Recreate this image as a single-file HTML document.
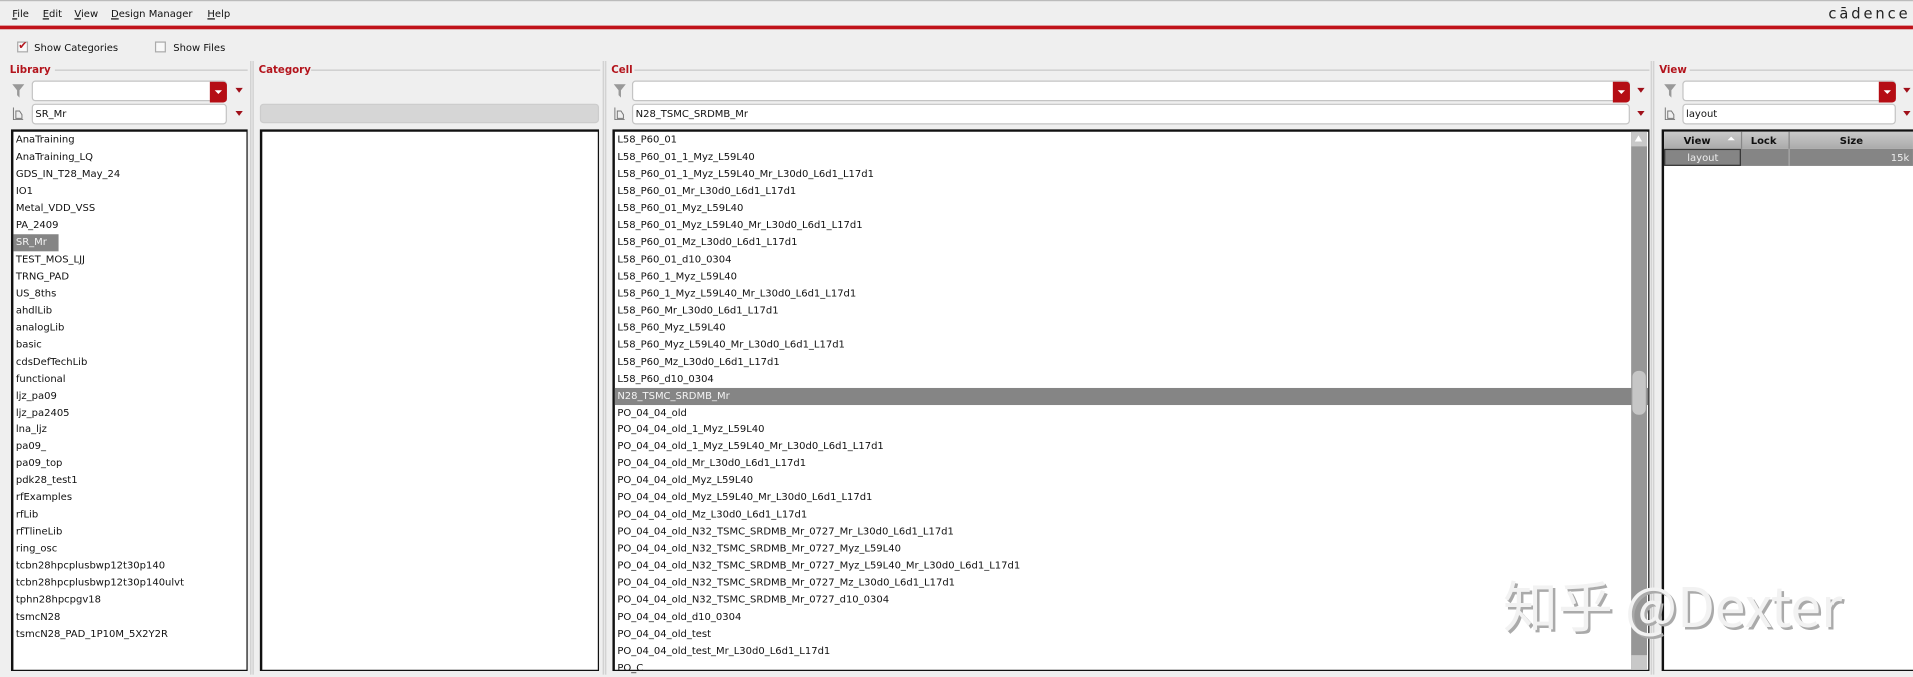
<!DOCTYPE html>
<html><head><meta charset="utf-8"><style>
*{margin:0;padding:0;box-sizing:border-box}
html,body{width:1913px;height:675px;overflow:hidden;background:#efefef}
#w{position:absolute;left:0;top:0;width:1568px;height:553px;transform:scale(1.22);transform-origin:0 0;font-family:"DejaVu Sans","Liberation Sans",sans-serif;font-size:8.2px;color:#111;background:#efefef}
.a{position:absolute}
.menu span{position:absolute;top:6px}
.lbl{position:absolute;color:#b3141c;font-weight:bold;font-size:8.4px}
.hr{position:absolute;height:1px;background:#c8c8c8}
.box{position:absolute;background:#fff;border:1px solid #c4c4c4;border-radius:3px;height:17px}
.rb{position:absolute;top:0;right:-1px;width:14px;height:17px;background:#b50d14;border-radius:0 3px 3px 0}
.rb:after{content:"";position:absolute;left:4px;top:7px;border:3px solid transparent;border-top:3px solid #fff}
.tri{position:absolute;border:3.5px solid transparent;border-top:4px solid #a0101a}
.list{position:absolute;background:#fff;border:1px solid #111;border-top:2px solid #111;border-left:2px solid #111}
.list div{height:13.97px;line-height:13.97px;padding-left:2px;white-space:nowrap}
.sel{background:#858585;color:#f4f4f4}
.vd{position:absolute;top:50px;width:3px;height:503px;border-left:1px solid #d0d0d0;border-right:1px solid #d0d0d0;background:#e8e8e8}
.fun{position:absolute;width:10px;height:11px}
</style></head><body><div id="w">
<div class="a" style="left:0;top:0;width:1568px;height:1px;background:#bbb"></div>
<div class="menu"><span style="left:10px"><u>F</u>ile</span><span style="left:35px"><u>E</u>dit</span><span style="left:61px"><u>V</u>iew</span><span style="left:91px"><u>D</u>esign Manager</span><span style="left:170px"><u>H</u>elp</span></div>
<div class="a" style="right:2px;top:4px;font-size:12px;letter-spacing:2.4px;color:#222">cādence</div>
<div class="a" style="left:0;top:21px;width:1568px;height:3px;background:#c0121a"></div>
<div class="a" style="left:14px;top:34px;width:9px;height:9px;border:1px solid #aaa;background:#f8f8f8;color:#b3141c;font-size:9px;line-height:7px;font-weight:bold">✔</div>
<div class="a" style="left:28px;top:34px">Show Categories</div>
<div class="a" style="left:127px;top:34px;width:9px;height:9px;border:1px solid #aaa;background:#f8f8f8"></div>
<div class="a" style="left:142px;top:34px">Show Files</div>

<div class="vd" style="left:205px"></div><div class="vd" style="left:494px"></div><div class="vd" style="left:1353px"></div>

<!-- Library -->
<div class="lbl" style="left:8px;top:52px">Library</div><div class="hr" style="left:45px;top:57px;width:158px"></div>
<svg class="fun" style="left:10px;top:69px" viewBox="0 0 10 11"><path d="M0 0H10L6 5V11L4 9V5Z" fill="#999"/></svg>
<div class="box" style="left:26px;top:66px;width:160px"><div class="rb"></div></div><div class="tri" style="left:193px;top:72px"></div>
<svg class="fun" style="left:10px;top:88px" viewBox="0 0 10 11"><path d="M1 0V10H9M3 3H6L8 6V9H3Z" fill="none" stroke="#777" stroke-width=".8"/></svg>
<div class="box" style="left:26px;top:85px;width:160px;line-height:15px;padding-left:2px">SR_Mr</div><div class="tri" style="left:193px;top:91px"></div>
<div class="list" style="left:9px;top:106px;width:194px;height:444px">
<div>AnaTraining</div><div>AnaTraining_LQ</div><div>GDS_IN_T28_May_24</div><div>IO1</div><div>Metal_VDD_VSS</div><div>PA_2409</div><div><span class="sel" style="padding:0 10px 0 2px;margin-left:-2px;display:inline-block">SR_Mr</span></div><div>TEST_MOS_LJJ</div><div>TRNG_PAD</div><div>US_8ths</div><div>ahdlLib</div><div>analogLib</div><div>basic</div><div>cdsDefTechLib</div><div>functional</div><div>ljz_pa09</div><div>ljz_pa2405</div><div>lna_ljz</div><div>pa09_</div><div>pa09_top</div><div>pdk28_test1</div><div>rfExamples</div><div>rfLib</div><div>rfTlineLib</div><div>ring_osc</div><div>tcbn28hpcplusbwp12t30p140</div><div>tcbn28hpcplusbwp12t30p140ulvt</div><div>tphn28hpcpgv18</div><div>tsmcN28</div><div>tsmcN28_PAD_1P10M_5X2Y2R</div></div>

<!-- Category -->
<div class="lbl" style="left:212px;top:52px">Category</div><div class="hr" style="left:255px;top:57px;width:237px"></div>
<div class="a" style="left:213px;top:85px;width:278px;height:16px;background:#d6d6d6;border:1px solid #ccc;border-radius:3px"></div>
<div class="list" style="left:213px;top:106px;width:278px;height:444px"></div>

<!-- Cell -->
<div class="lbl" style="left:501px;top:52px">Cell</div><div class="hr" style="left:520px;top:57px;width:832px"></div>
<svg class="fun" style="left:503px;top:69px" viewBox="0 0 10 11"><path d="M0 0H10L6 5V11L4 9V5Z" fill="#999"/></svg>
<div class="box" style="left:518px;top:66px;width:818px"><div class="rb"></div></div><div class="tri" style="left:1342px;top:72px"></div>
<svg class="fun" style="left:503px;top:88px" viewBox="0 0 10 11"><path d="M1 0V10H9M3 3H6L8 6V9H3Z" fill="none" stroke="#777" stroke-width=".8"/></svg>
<div class="box" style="left:518px;top:85px;width:818px;line-height:15px;padding-left:2px">N28_TSMC_SRDMB_Mr</div><div class="tri" style="left:1342px;top:91px"></div>
<div class="list" style="left:502px;top:106px;width:850px;height:444px">
<div>L58_P60_01</div><div>L58_P60_01_1_Myz_L59L40</div><div>L58_P60_01_1_Myz_L59L40_Mr_L30d0_L6d1_L17d1</div><div>L58_P60_01_Mr_L30d0_L6d1_L17d1</div><div>L58_P60_01_Myz_L59L40</div><div>L58_P60_01_Myz_L59L40_Mr_L30d0_L6d1_L17d1</div><div>L58_P60_01_Mz_L30d0_L6d1_L17d1</div><div>L58_P60_01_d10_0304</div><div>L58_P60_1_Myz_L59L40</div><div>L58_P60_1_Myz_L59L40_Mr_L30d0_L6d1_L17d1</div><div>L58_P60_Mr_L30d0_L6d1_L17d1</div><div>L58_P60_Myz_L59L40</div><div>L58_P60_Myz_L59L40_Mr_L30d0_L6d1_L17d1</div><div>L58_P60_Mz_L30d0_L6d1_L17d1</div><div>L58_P60_d10_0304</div><div class="sel">N28_TSMC_SRDMB_Mr</div><div>PO_04_04_old</div><div>PO_04_04_old_1_Myz_L59L40</div><div>PO_04_04_old_1_Myz_L59L40_Mr_L30d0_L6d1_L17d1</div><div>PO_04_04_old_Mr_L30d0_L6d1_L17d1</div><div>PO_04_04_old_Myz_L59L40</div><div>PO_04_04_old_Myz_L59L40_Mr_L30d0_L6d1_L17d1</div><div>PO_04_04_old_Mz_L30d0_L6d1_L17d1</div><div>PO_04_04_old_N32_TSMC_SRDMB_Mr_0727_Mr_L30d0_L6d1_L17d1</div><div>PO_04_04_old_N32_TSMC_SRDMB_Mr_0727_Myz_L59L40</div><div>PO_04_04_old_N32_TSMC_SRDMB_Mr_0727_Myz_L59L40_Mr_L30d0_L6d1_L17d1</div><div>PO_04_04_old_N32_TSMC_SRDMB_Mr_0727_Mz_L30d0_L6d1_L17d1</div><div>PO_04_04_old_N32_TSMC_SRDMB_Mr_0727_d10_0304</div><div>PO_04_04_old_d10_0304</div><div>PO_04_04_old_test</div><div>PO_04_04_old_test_Mr_L30d0_L6d1_L17d1</div><div>PO_C</div></div>
<div class="a" style="left:1337px;top:108px;width:13px;height:441px;background:#979797"></div>
<div class="a" style="left:1337px;top:108px;width:13px;height:12px;background:#c8c8c8"></div>
<div class="a" style="left:1340px;top:111px;border:3.5px solid transparent;border-bottom:5px solid #fff;border-top:0"></div>
<div class="a" style="left:1338px;top:304px;width:11px;height:36px;background:#c6c6c6;border-radius:5px"></div>
<div class="a" style="left:1337px;top:537px;width:13px;height:12px;background:#c8c8c8"></div>

<!-- View -->
<div class="lbl" style="left:1360px;top:52px">View</div><div class="hr" style="left:1385px;top:57px;width:183px"></div>
<svg class="fun" style="left:1364px;top:69px" viewBox="0 0 10 11"><path d="M0 0H10L6 5V11L4 9V5Z" fill="#999"/></svg>
<div class="box" style="left:1379px;top:66px;width:175px"><div class="rb"></div></div><div class="tri" style="left:1560px;top:72px"></div>
<svg class="fun" style="left:1364px;top:88px" viewBox="0 0 10 11"><path d="M1 0V10H9M3 3H6L8 6V9H3Z" fill="none" stroke="#777" stroke-width=".8"/></svg>
<div class="box" style="left:1379px;top:85px;width:175px;line-height:15px;padding-left:2px">layout</div><div class="tri" style="left:1560px;top:91px"></div>
<div class="list" style="left:1362px;top:106px;width:210px;height:444px"></div>
<div class="a" style="left:1364px;top:108px;width:204px;height:14px;background:linear-gradient(#c9c9c9,#aaa);font-weight:bold;line-height:14px">
<span class="a" style="left:16px">View</span><span class="a" style="left:52px;top:4px;border:3px solid transparent;border-bottom:3px solid #fff;border-top:0"></span>
<span class="a" style="left:63px;top:0;width:1px;height:14px;background:#888"></span><span class="a" style="left:71px">Lock</span>
<span class="a" style="left:102px;top:0;width:1px;height:14px;background:#888"></span><span class="a" style="left:144px">Size</span></div>
<div class="a" style="left:1364px;top:122px;width:204px;height:14px;background:#858585;color:#eee;line-height:14px">
<span class="a" style="left:0;top:0;width:63px;height:14px;border:1px solid #333"></span><span class="a" style="left:19px">layout</span>
<span class="a" style="left:102px;top:0;width:1px;height:14px;background:#aaa"></span><span class="a" style="right:3px">15k</span></div>

<div class="a" style="left:1232px;top:462px;font-family:'Noto Sans CJK SC',sans-serif;font-size:45px;color:#f2f2f2;text-shadow:2px 2px 0 #aaa;white-space:nowrap;letter-spacing:0px">知乎 @Dexter</div>
</div></body></html>
